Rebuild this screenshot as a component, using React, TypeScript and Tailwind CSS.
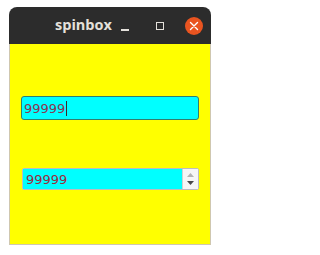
import React from "react";

export default function App() {
  return (
    <div className="w-[220px] h-[255px] bg-white pt-[7px] pl-[9px]">
      <div className="w-[202px] flex flex-col">
        <div className="h-[37px] bg-[#2c2c2c] rounded-t-[8px] flex items-center pl-[46px]">
          <span
            className="text-[14.5px] font-bold text-[#e4e1db] leading-none"
            style={{ fontFamily: '"Open Sans", sans-serif' }}
          >
            spinbox
          </span>
          <div className="ml-[9px] mt-[9px] w-[8px] h-[1.5px] bg-[#e4e1db]" />
          <div className="ml-[27px] w-[8px] h-[8px] border-[1.5px] border-[#e4e1db]" />
          <div className="ml-[21px] w-[18px] h-[18px] rounded-full bg-[#e95420] flex items-center justify-center">
            <svg width="10" height="10" viewBox="0 0 10 10">
              <path d="M1.5 1.5 L8.5 8.5 M8.5 1.5 L1.5 8.5" stroke="#fff" strokeWidth="1.4" strokeLinecap="round" />
            </svg>
          </div>
        </div>
        <div className="h-[201px] bg-[#ffff00] border-x border-b border-[#cfc7b0] pl-[11px] pt-[52px]">
          <div className="w-[178px] h-[24px] bg-[#00ffff] border border-[#2f7f70] rounded-[3px] flex items-center pl-[2px]">
            <span
              className="text-[13px] text-[#8a3550] leading-none"
              style={{ fontFamily: '"DejaVu Sans", sans-serif' }}
            >
              99999
            </span>
            <div className="ml-[1px] w-[1px] h-[15px] bg-[#3a2a2a]" />
          </div>
          <div className="ml-[1px] mt-[48px] w-[177px] h-[22px] border border-[#bdbdbd] rounded-[2px] flex bg-white">
            <div className="flex-1 bg-[#00ffff] flex items-center pl-[3px]">
              <span
                className="text-[13px] text-[#9c2a3a] leading-none"
                style={{ fontFamily: '"DejaVu Sans", sans-serif' }}
              >
                99999
              </span>
            </div>
            <div className="w-[16px] border-l border-[#d0d0d0] bg-[#f6f6f6] flex flex-col items-center justify-center gap-[4px]">
              <svg width="7" height="4" viewBox="0 0 7 4">
                <path d="M0 4 L3.5 0 L7 4 Z" fill="#b4b4b4" />
              </svg>
              <svg width="7" height="4" viewBox="0 0 7 4">
                <path d="M0 0 L3.5 4 L7 0 Z" fill="#4a4a4a" />
              </svg>
            </div>
          </div>
        </div>
      </div>
    </div>
  );
}
